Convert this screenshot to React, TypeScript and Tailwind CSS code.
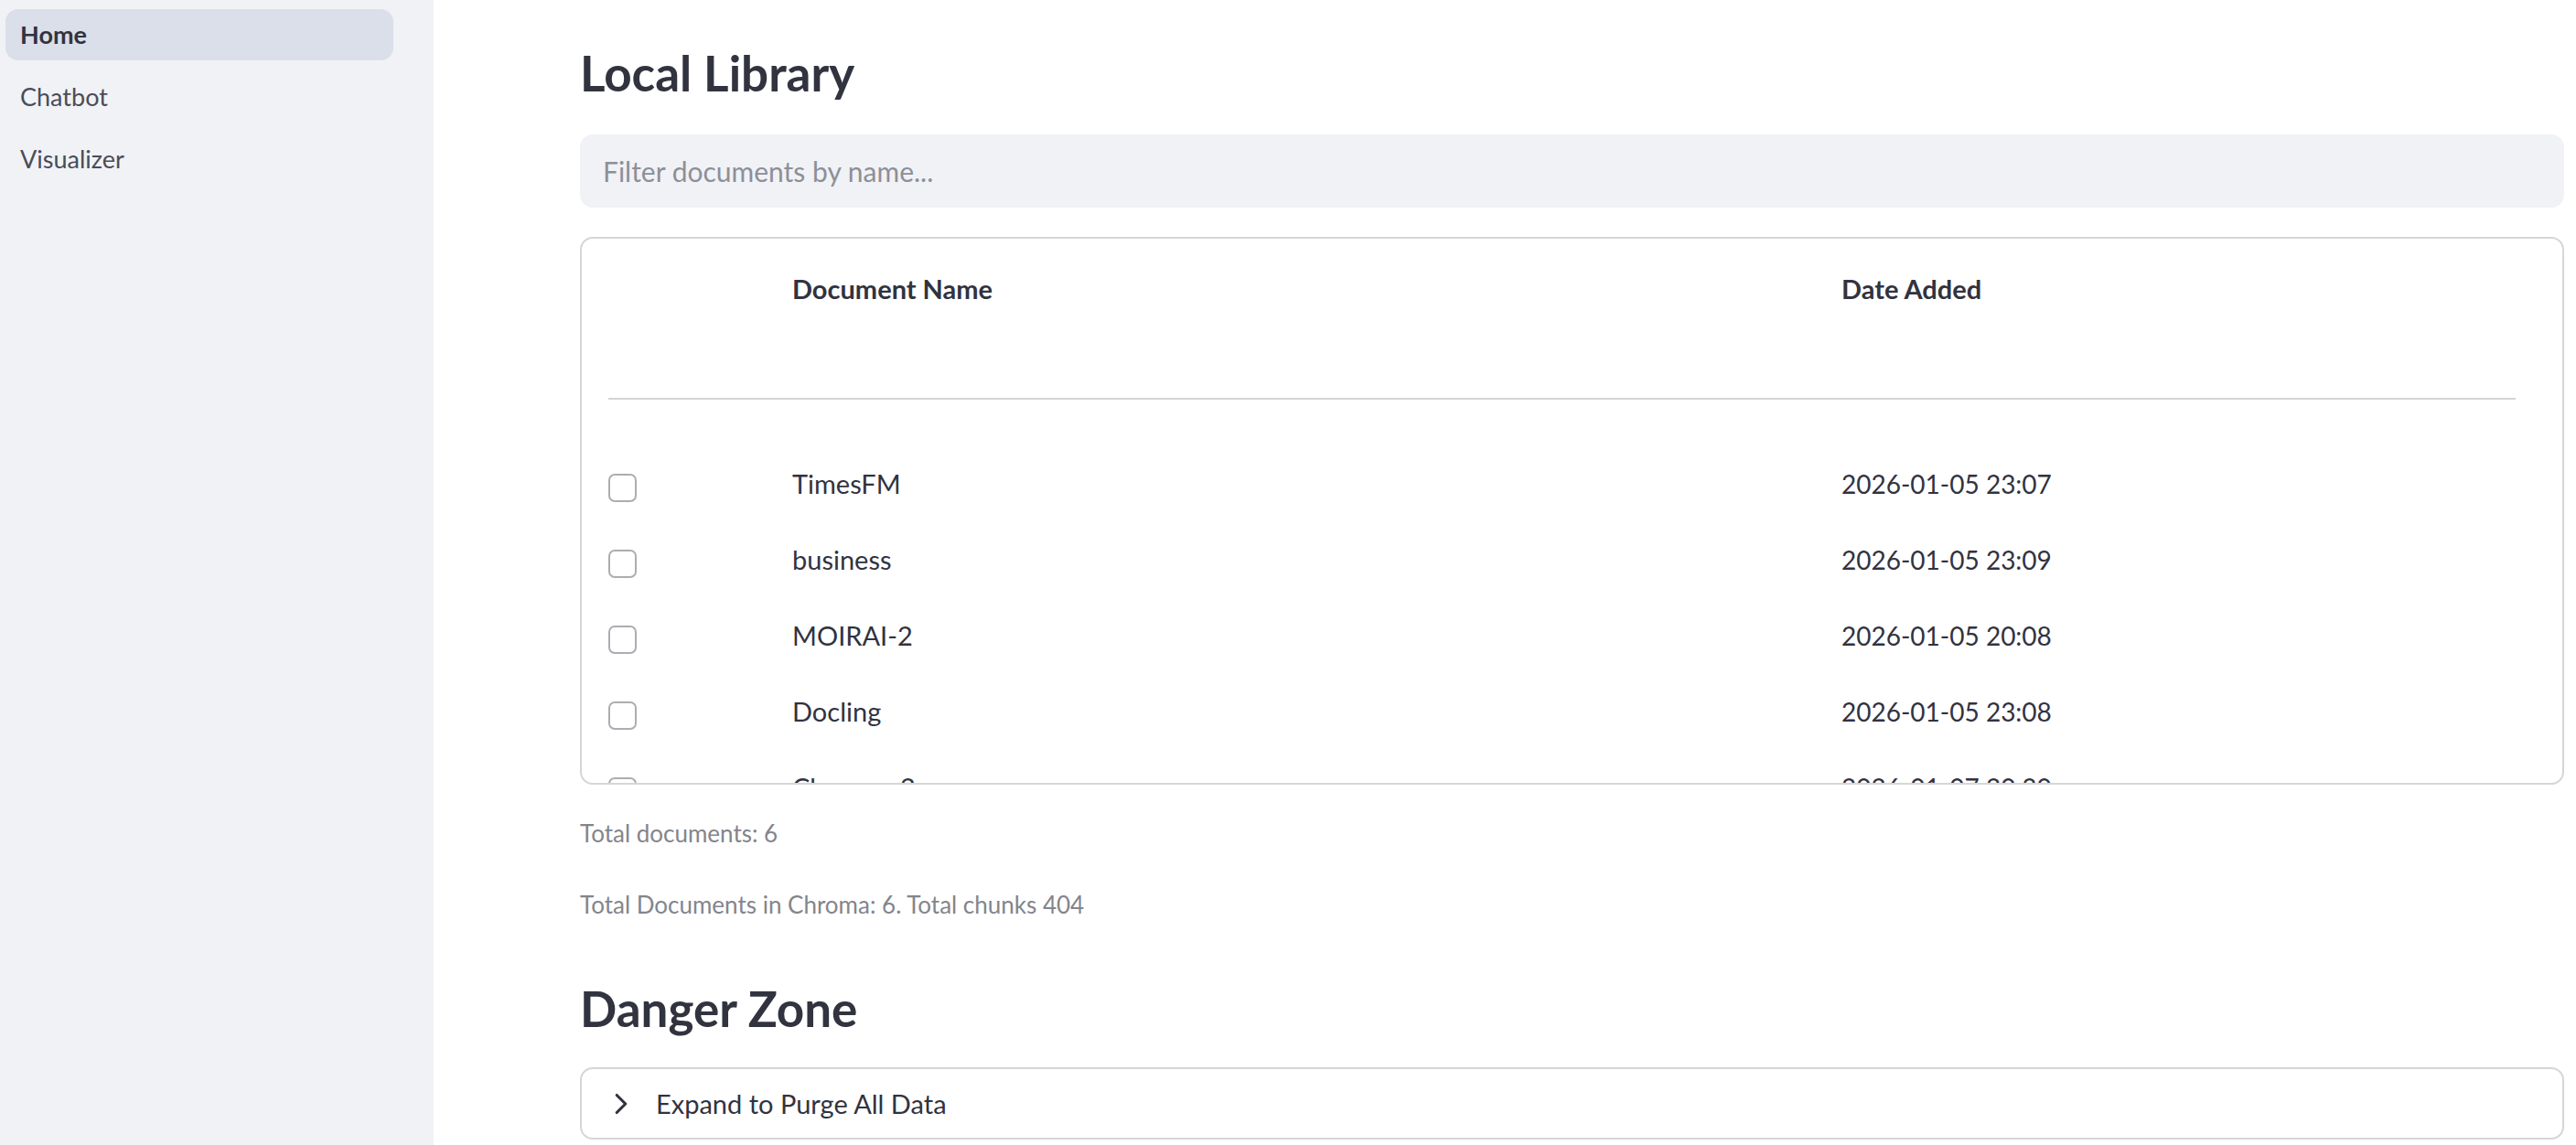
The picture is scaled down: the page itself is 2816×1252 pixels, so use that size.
import React from "react";
import { ChevronRight } from "lucide-react";

const font = { fontFamily: "Lato, 'Noto Sans', 'Liberation Sans', sans-serif" };

type Doc = { name: string; added: string };

const docs: Doc[] = [
  { name: "TimesFM", added: "2026-01-05 23:07" },
  { name: "business", added: "2026-01-05 23:09" },
  { name: "MOIRAI-2", added: "2026-01-05 20:08" },
  { name: "Docling", added: "2026-01-05 23:08" },
  { name: "Chronos-2", added: "2026-01-07 20:30" },
  { name: "Sundial", added: "2026-01-07 20:31" },
];

const navItems = ["Home", "Chatbot", "Visualizer"];

function Sidebar() {
  return (
    <aside className="w-[474px] shrink-0 bg-[#f0f2f6] pl-[6px] pt-[10px]">
      <nav className="flex w-[424px] flex-col gap-[12px]">
        {navItems.map((item, i) => (
          <div
            key={item}
            className={
              i === 0
                ? "flex h-[56px] items-center rounded-[14px] bg-[#dadfe9] px-[16px] text-[27px] font-bold text-[#31333f]"
                : "flex h-[56px] items-center rounded-[14px] px-[16px] text-[27px] text-[#4a4c57]"
            }
          >
            {item}
          </div>
        ))}
      </nav>
    </aside>
  );
}

function Checkbox() {
  return <div className="mt-[10px] h-[31px] w-[31px] rounded-[7px] border-2 border-[#acadb2] bg-white" />;
}

function DocumentTable() {
  return (
    <div className="h-[599px] overflow-hidden rounded-[14px] border-2 border-[#d6d6d9] pl-[29px] pr-[51px]">
      <div className="grid h-[176px] grid-cols-[201px_1147px_1fr] border-b-2 border-[#d5d5d8] pt-[37px] text-[29px] font-bold leading-[36px] text-[#31333f]">
        <div />
        <div>Document Name</div>
        <div>Date Added</div>
      </div>
      <div className="pt-[50px]">
        {docs.map((d) => (
          <div
            key={d.name}
            className="grid h-[83px] grid-cols-[201px_1147px_1fr] items-center text-[29px] text-[#31333f]"
          >
            <Checkbox />
            <div>{d.name}</div>
            <div className="text-[28px]">{d.added}</div>
          </div>
        ))}
      </div>
    </div>
  );
}

export default function App() {
  return (
    <div className="flex h-[1252px] w-full overflow-hidden bg-white" style={font}>
      <Sidebar />
      <main className="flex min-w-0 flex-1 flex-col pl-[160px] pr-[13px]">
        <h2 className="mt-[53px] text-[53px] font-bold leading-none text-[#31333f]">Local Library</h2>
        <div className="mt-[41px] flex h-[80px] shrink-0 items-center rounded-[14px] bg-[#f0f2f6] px-[25px] text-[30px] text-[#8d8f98]">
          Filter documents by name...
        </div>
        <div className="mt-[32px]">
          <DocumentTable />
        </div>
        <p className="mt-[40px] text-[26px] leading-none text-[#83858c]">Total documents: 6</p>
        <p className="mt-[52px] text-[26px] leading-none text-[#83858c]">
          Total Documents in Chroma: 6. Total chunks 404
        </p>
        <h2 className="mt-[74px] text-[53px] font-bold leading-none text-[#31333f]">Danger Zone</h2>
        <div className="mt-[38px] flex h-[79px] shrink-0 items-center rounded-[14px] border-2 border-[#d6d6d9] pl-[24px] text-[29px] text-[#31333f]">
          <ChevronRight size={38} strokeWidth={2} className="text-[#31333f]" />
          <span className="ml-[19px]">Expand to Purge All Data</span>
        </div>
      </main>
    </div>
  );
}
